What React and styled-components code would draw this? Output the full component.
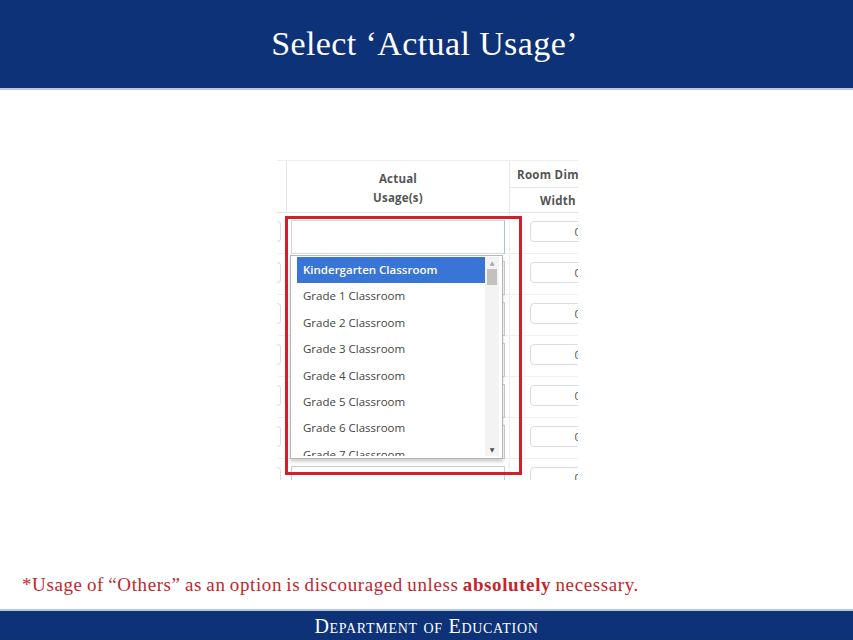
import React from "react";
import styled, { createGlobalStyle } from "styled-components";

const GlobalStyle = createGlobalStyle`
  html, body {
    margin: 0;
    padding: 0;
    background: #fff;
  }
  * { box-sizing: border-box; }
`;

const options = [
  "Kindergarten Classroom",
  "Grade 1 Classroom",
  "Grade 2 Classroom",
  "Grade 3 Classroom",
  "Grade 4 Classroom",
  "Grade 5 Classroom",
  "Grade 6 Classroom",
  "Grade 7 Classroom",
  "Grade 8 Classroom",
];

const rows = [0, 1, 2, 3, 4, 5, 6];

const App = () => {
  return (
    <Page>
      <GlobalStyle />
      <Header>
        <Title>Select ‘Actual Usage’</Title>
      </Header>
      <Main>
        <Shot>
          <Table>
            <HeadRow>
              <LeftHead />
              <UsageHead>
                Actual
                <br />
                Usage(s)
              </UsageHead>
              <DimHead>
                <DimTop>Room Dimensions</DimTop>
                <DimSub>Width</DimSub>
              </DimHead>
            </HeadRow>
            {rows.map((r) => (
              <Row key={r}>
                <LeftCell>
                  <Stub />
                </LeftCell>
                <UsageCell>
                  <SelectBox open={r === 0} />
                </UsageCell>
                <DimCell>
                  <NumInput>0</NumInput>
                </DimCell>
              </Row>
            ))}
          </Table>
          <Dropdown>
            <List>
              {options.map((o, i) => (
                <Item key={o} active={i === 0}>
                  {o}
                </Item>
              ))}
            </List>
            <Scrollbar>
              <Arrow>▲</Arrow>
              <Thumb />
              <Track />
              <Arrow dark>▼</Arrow>
            </Scrollbar>
          </Dropdown>
          <Highlight />
        </Shot>
      </Main>
      <Note>
        *Usage of “Others” as an option is discouraged unless <b>absolutely</b>{" "}
        necessary.
      </Note>
      <Footer>
        <FooterText>Department of Education</FooterText>
      </Footer>
    </Page>
  );
};

export default App;

const Page = styled.div`
  width: 853px;
  height: 640px;
  display: flex;
  flex-direction: column;
  background: #fff;
  overflow: hidden;
`;

const Header = styled.div`
  height: 90px;
  background: #0d3278;
  border-bottom: 2px solid #b9c8e2;
  display: flex;
  align-items: center;
  justify-content: center;
`;

const Title = styled.h1`
  margin: 0 0 0 -4px;
  color: #fff;
  font-family: "Liberation Serif", "DejaVu Serif", serif;
  font-weight: normal;
  font-size: 34px;
  letter-spacing: 0.4px;
`;

const Main = styled.div`
  flex: 1;
  display: flex;
  justify-content: center;
  padding-top: 70px;
  padding-left: 2px;
`;

const Shot = styled.div`
  position: relative;
  width: 301px;
  height: 320px;
  overflow: hidden;
  background: #fff;
  font-family: "Open Sans", "DejaVu Sans", sans-serif;
`;

const Table = styled.div`
  display: flex;
  flex-direction: column;
  border-top: 1px solid #eee;
`;

const HeadRow = styled.div`
  display: grid;
  grid-template-columns: 10px 223px 68px;
  height: 52px;
  border-bottom: 1px solid #e2e2e2;
`;

const LeftHead = styled.div`
  border-right: 1px solid #e6e6e6;
`;

const UsageHead = styled.div`
  text-align: center;
  font-size: 11.5px;
  font-weight: 700;
  color: #555;
  line-height: 19px;
  padding-top: 8px;
  letter-spacing: 0.2px;
  border-right: 1px solid #e6e6e6;
`;

const DimHead = styled.div`
  display: flex;
  flex-direction: column;
  font-size: 11.5px;
  font-weight: 700;
  color: #555;
  white-space: nowrap;
  letter-spacing: 0.3px;
`;

const DimTop = styled.div`
  height: 27px;
  padding: 6px 0 0 7px;
  border-bottom: 1px solid #e6e6e6;
`;

const DimSub = styled.div`
  width: 96px;
  text-align: center;
  padding-top: 5px;
`;

const Row = styled.div`
  display: grid;
  grid-template-columns: 10px 223px 68px;
  height: 41px;
  border-bottom: 1px solid #f0f0f0;
`;

const LeftCell = styled.div`
  padding-top: 8px;
`;

const Stub = styled.div`
  width: 4px;
  height: 21px;
  border: 1px solid #ddd;
  border-left: none;
  border-radius: 0 4px 4px 0;
`;

const UsageCell = styled.div`
  padding: 7px 4px 0;
  border-right: 1px solid #eee;
`;

const SelectBox = styled.div`
  height: 34px;
  background: #fff;
  border: 1px solid ${({ open }) => (open ? "#d6d6d6" : "#ccc")};
  border-right-color: ${({ open }) => (open ? "#a9c0e6" : "#ccc")};
`;

const DimCell = styled.div`
  padding: 8px 0 0 20px;
`;

const NumInput = styled.div`
  width: 60px;
  height: 21px;
  border: 1px solid #ddd;
  border-radius: 4px;
  text-align: right;
  padding-right: 8px;
  font-size: 11.5px;
  color: #555;
  line-height: 19px;
`;

const Dropdown = styled.div`
  position: absolute;
  left: 13px;
  top: 95px;
  width: 213px;
  height: 204px;
  background: #fff;
  border: 1px solid #b5b5b5;
  box-shadow: 0 3px 3px rgba(0, 0, 0, 0.18);
  display: flex;
  padding: 1px 3px 2px 6px;
`;

const List = styled.div`
  flex: 1;
  overflow: hidden;
`;

const Item = styled.div`
  height: 26.4px;
  line-height: 25px;
  padding-left: 6px;
  font-size: 11.5px;
  white-space: nowrap;
  color: ${({ active }) => (active ? "#fff" : "#444")};
  font-weight: ${({ active }) => (active ? 600 : 400)};
  background: ${({ active }) => (active ? "#3875d7" : "transparent")};
`;

const Scrollbar = styled.div`
  width: 14px;
  display: flex;
  flex-direction: column;
  background: #f3f3f3;
`;

const Arrow = styled.div`
  height: 12px;
  font-size: 6px;
  line-height: 12px;
  text-align: center;
  color: ${({ dark }) => (dark ? "#505050" : "#a3a3a3")};
`;

const Thumb = styled.div`
  height: 16px;
  margin: 0 2px;
  background: #c1c1c1;
`;

const Track = styled.div`
  flex: 1;
`;

const Highlight = styled.div`
  position: absolute;
  left: 8px;
  top: 56px;
  width: 237px;
  height: 259px;
  border: 3px solid #d2202b;
  pointer-events: none;
`;

const Note = styled.p`
  margin: 0 0 12px 22px;
  font-family: "Liberation Serif", "DejaVu Serif", serif;
  font-size: 19px;
  color: #c3262d;
  line-height: 24px;
  letter-spacing: 0.6px;
  word-spacing: -1px;

  b {
    font-weight: 700;
  }
`;

const Footer = styled.div`
  height: 31px;
  background: #0d3278;
  border-top: 2px solid #b9c8e2;
  display: flex;
  align-items: center;
  justify-content: center;
`;

const FooterText = styled.div`
  color: #fff;
  font-family: "Liberation Serif", "DejaVu Serif", serif;
  font-variant: small-caps;
  font-size: 20px;
  letter-spacing: 0.7px;
  line-height: 1;
`;
